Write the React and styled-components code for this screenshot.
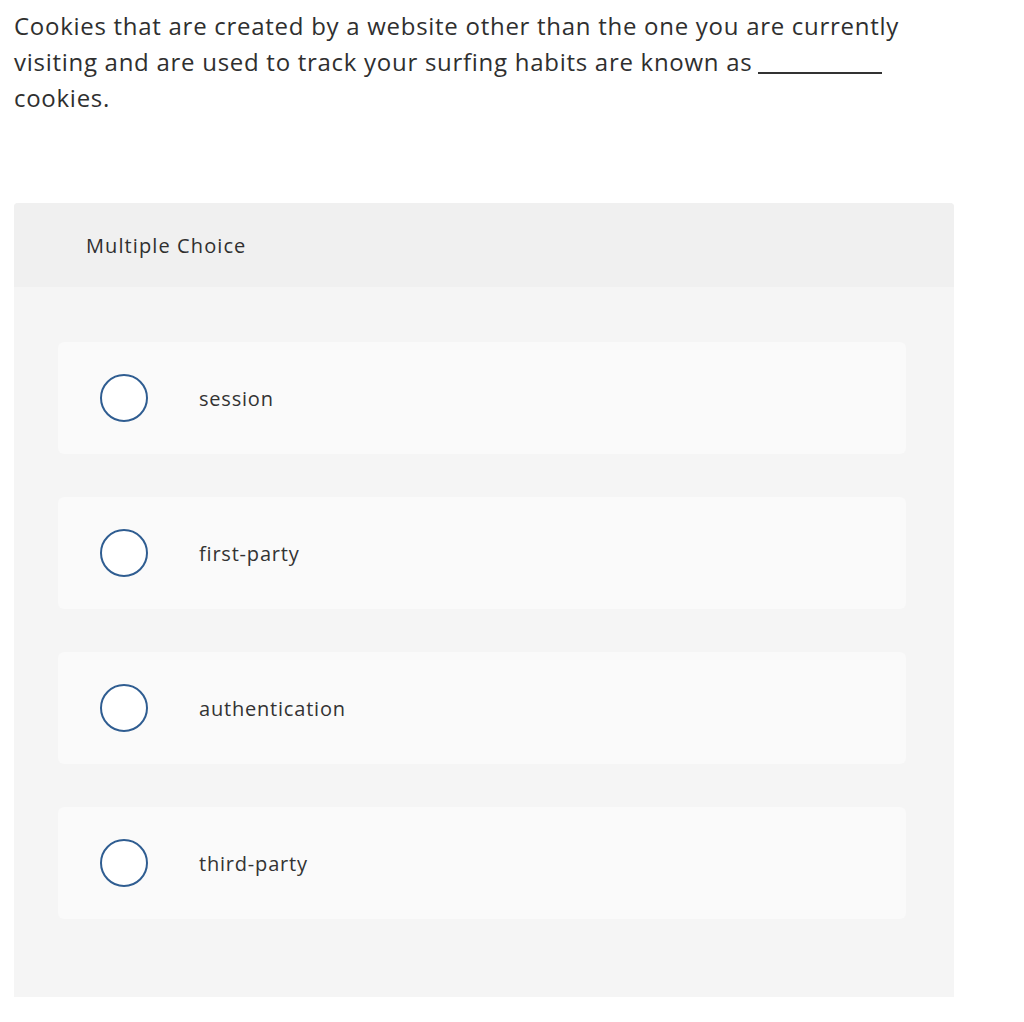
import styled, { createGlobalStyle } from "styled-components"

const GlobalStyle = createGlobalStyle`
    body {
        margin: 0;
        background: #fff;
        font-family: "Open Sans", Lato, sans-serif;
        color: #333;
    }
`

const Page = styled.div`
    width: 1024px;
    padding: 8px 0 0 14px;
    box-sizing: border-box;
`

const Question = styled.p`
    margin: 0;
    font-size: 24px;
    line-height: 36px;
    letter-spacing: 0.72px;
    color: #2f2f2f;
    white-space: nowrap;
`

const Blank = styled.span`
    display: inline-block;
    width: 124px;
    margin-left: 6px;
    border-bottom: 2px solid #333;
    vertical-align: baseline;
    transform: translateY(3px);
`

const Panel = styled.div`
    margin-top: 87px;
    width: 940px;
    background-color: #f5f5f5;
    border-top-left-radius: 4px;
    border-top-right-radius: 4px;
`

const PanelHeader = styled.div`
    height: 84px;
    display: flex;
    align-items: center;
    padding-left: 72px;
    background-color: #f0f0f0;
    border-top-left-radius: 4px;
    border-top-right-radius: 4px;
    font-size: 20px;
    letter-spacing: 1.1px;
    color: #2f2f2f;
`

const Options = styled.div`
    display: flex;
    flex-direction: column;
    gap: 43px;
    padding: 55px 48px 78px 44px;
`

const Option = styled.label`
    height: 112px;
    display: flex;
    align-items: center;
    background-color: #fafafa;
    border-radius: 6px;
    cursor: pointer;
`

const Radio = styled.span`
    width: 44px;
    height: 44px;
    margin-left: 42px;
    border: 2px solid #2f5d91;
    border-radius: 50%;
    background: #fff;
    flex: 0 0 auto;
`

const OptionText = styled.span`
    margin-left: 51px;
    font-size: 20px;
    letter-spacing: 0.8px;
    color: #333;
`

const choices = ["session", "first-party", "authentication", "third-party"]

export default function App() {
    return (
        <Page>
            <GlobalStyle />
            <Question>
                Cookies that are created by a website other than the one you are currently
                <br />
                visiting and are used to track your surfing habits are known as<Blank />
                <br />
                cookies.
            </Question>
            <Panel>
                <PanelHeader>Multiple Choice</PanelHeader>
                <Options>
                    {choices.map((c) => (
                        <Option key={c}>
                            <Radio />
                            <OptionText>{c}</OptionText>
                        </Option>
                    ))}
                </Options>
            </Panel>
        </Page>
    )
}
